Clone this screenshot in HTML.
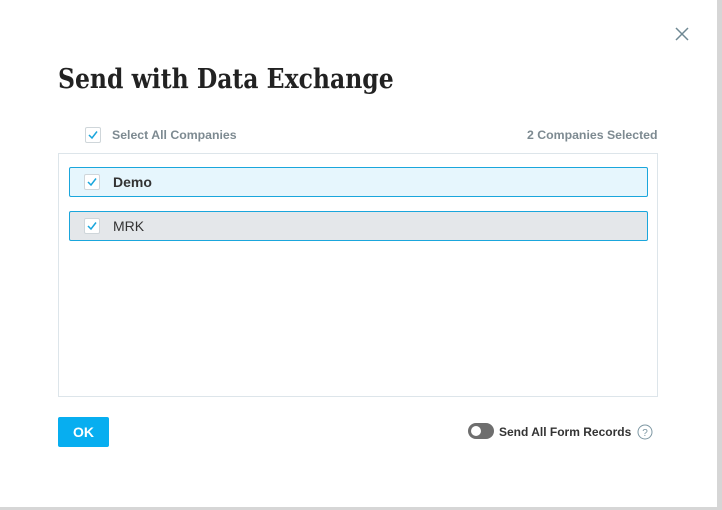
<!DOCTYPE html>
<html><head><meta charset="utf-8"><style>
html,body{margin:0;padding:0;width:722px;height:510px;overflow:hidden;background:#d6d6d6;font-family:"Liberation Sans",sans-serif;}
.modal{position:absolute;left:0;top:0;width:717px;height:507px;background:#fff;}
.title{position:absolute;left:58px;top:64px;font-family:"DejaVu Serif","Liberation Serif",serif;font-size:27px;color:#222;font-weight:bold;transform:scaleX(0.87);transform-origin:0 0;white-space:nowrap;}
.cb{position:absolute;width:16px;height:16px;border:1.5px solid #cfd6da;border-radius:2px;background:#fff;box-sizing:border-box;}
.cb svg{position:absolute;left:2px;top:2px;}
.lbl{position:absolute;font-size:12.3px;font-weight:bold;color:#7d8a91;}
.list{position:absolute;left:58px;top:153px;width:600px;height:244px;border:1px solid #dde5ea;box-sizing:border-box;}
.row{position:absolute;left:10px;width:579px;height:30px;border:1px solid #1aa6dc;border-radius:2px;box-sizing:border-box;}
.row span{position:absolute;left:43px;top:6px;font-size:14px;font-weight:bold;color:#333;}
.ok{position:absolute;left:58px;top:417px;width:51px;height:30px;background:#07aef0;color:#fff;font-weight:bold;font-size:14px;text-align:center;line-height:30px;border-radius:2px;}
.tog{position:absolute;left:468px;top:423px;width:26px;height:16px;border-radius:8px;background:#6e6e6e;}
.tog i{position:absolute;left:3px;top:3px;width:10px;height:10px;border-radius:50%;background:#fff;}
</style></head><body>
<div class="modal">
<svg style="position:absolute;left:675px;top:27px" width="14" height="14"><path d="M1 1L13 13M13 1L1 13" stroke="#6f8893" stroke-width="1.5"/></svg>
<div class="title">Send with Data Exchange</div>
<div class="cb" style="left:85px;top:127px"><svg width="10" height="10"><path d="M1 5L4 8L9 1.5" fill="none" stroke="#1aa6dc" stroke-width="1.5"/></svg></div>
<div class="lbl" style="left:112px;top:128px">Select All Companies</div>
<div class="lbl" style="left:527px;top:128px">2 Companies Selected</div>
<div class="list">
<div class="row" style="top:13px;background:#e6f6fd"><div class="cb" style="left:14px;top:6px"><svg width="10" height="10"><path d="M1 5L4 8L9 1.5" fill="none" stroke="#1aa6dc" stroke-width="1.5"/></svg></div><span>Demo</span></div>
<div class="row" style="top:57px;background:#e4e7ea"><div class="cb" style="left:14px;top:6px"><svg width="10" height="10"><path d="M1 5L4 8L9 1.5" fill="none" stroke="#1aa6dc" stroke-width="1.5"/></svg></div><span style="font-weight:normal">MRK</span></div>
</div>
<div class="ok">OK</div>
<div class="tog"><i></i></div>
<div class="lbl" style="left:499px;top:425px;color:#333;font-size:12px">Send All Form Records</div>
<svg style="position:absolute;left:637px;top:424px" width="16" height="16"><circle cx="8" cy="8" r="7" fill="none" stroke="#7d97a3" stroke-width="1"/><text x="8" y="12" font-size="10" text-anchor="middle" fill="#7d97a3" font-family="Liberation Sans">?</text></svg>
</div>
</body></html>
